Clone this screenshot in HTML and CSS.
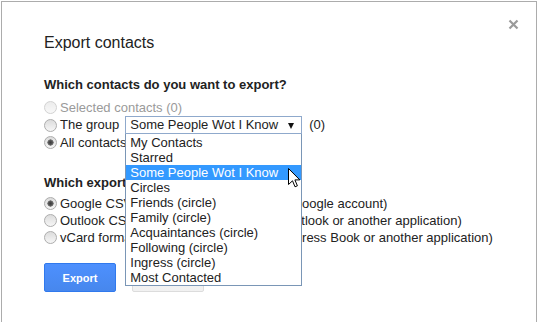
FILE: index.html
```html
<!DOCTYPE html>
<html>
<head>
<meta charset="utf-8">
<title>Export contacts</title>
<link rel="stylesheet" href="styles.css">
</head>
<body>
<div class="dialog">
  <button class="close" aria-label="Close"><svg width="11" height="11" viewBox="0 0 11 11"><path d="M1.5 1.5L9.5 9.5M9.5 1.5L1.5 9.5" stroke="#9a9a9a" stroke-width="2.2"/></svg></button>
  <h1 class="title">Export contacts</h1>

  <h2 class="heading">Which contacts do you want to export?</h2>
  <div class="options">
    <div class="row disabled"><span class="radio"></span><span>Selected contacts (0)</span></div>
    <div class="row tall"><span class="radio"></span><span>The group</span>
      <div class="select-wrap">
        <div class="select"><span>Some People Wot I Know</span><span class="arrow"></span></div>
        <ul class="list">
          <li>My Contacts</li>
          <li>Starred</li>
          <li class="hl">Some People Wot I Know</li>
          <li>Circles</li>
          <li>Friends (circle)</li>
          <li>Family (circle)</li>
          <li>Acquaintances (circle)</li>
          <li>Following (circle)</li>
          <li>Ingress (circle)</li>
          <li>Most Contacted</li>
        </ul>
        <svg class="cursor" width="13" height="20" viewBox="0 0 13 20"><path d="M0.5 0.5V16.5L4.5 12.8L7 18.8L9.4 17.8L6.9 11.9H11.8Z" fill="#fff" stroke="#000" stroke-width="1" stroke-linejoin="miter"/></svg>
      </div>
      <span class="count">(0)</span>
    </div>
    <div class="row"><span class="radio checked"></span><span>All contacts</span></div>
  </div>

  <h2 class="heading second">Which export format?</h2>
  <div class="options formats">
    <div class="row"><span class="radio checked"></span><span>Google CSV format (for importing into a Google account)</span></div>
    <div class="row"><span class="radio"></span><span>Outlook CSV format (for importing into Outlook or another application)</span></div>
    <div class="row"><span class="radio"></span><span>vCard format (for importing into Apple Address Book or another application)</span></div>
  </div>

  <div class="buttons">
    <button class="btn primary">Export</button>
    <button class="btn">Cancel</button>
  </div>
</div>
</body>
</html>
```

FILE: styles.css
```css
html, body {
  margin: 0;
  padding: 0;
  background: #fff;
  overflow: hidden;
}
body {
  box-sizing: border-box;
  height: 322px;
  padding: 1px 0 0 1px;
  font-family: "Liberation Sans", Arial, sans-serif;
  color: #222;
  font-size: 13px;
}
.dialog {
  position: relative;
  box-sizing: border-box;
  width: 536px;
  height: 321px;
  border: 1px solid #acacac;
  border-bottom: 0;
  padding: 31px 42px 0 42px;
  background: #fff;
}
.close {
  position: absolute;
  top: 17px;
  right: 17px;
  width: 11px;
  height: 11px;
  padding: 0;
  border: 0;
  background: none;
  display: block;
}
.close svg { display: block; }
.title {
  margin: 0;
  font-size: 16px;
  line-height: 20px;
  font-weight: normal;
  color: #222;
}
.heading {
  margin: 24px 0 0 0;
  font-size: 13px;
  line-height: 16px;
  font-weight: bold;
  color: #222;
}
.options {
  margin-top: 6px;
  display: flex;
  flex-direction: column;
}
.formats {
  margin-top: 4px;
}
.row {
  display: flex;
  align-items: center;
  height: 17px;
  line-height: 17px;
  white-space: nowrap;
}
.row.tall {
  height: 18px;
  line-height: 18px;
}
.row.disabled {
  color: #9a9a9a;
}
.radio {
  box-sizing: border-box;
  width: 13px;
  height: 13px;
  border-radius: 50%;
  border: 1px solid #adadad;
  background: linear-gradient(#dcdcdc, #f6f6f6);
  margin-right: 3px;
  flex: none;
}
.row.disabled .radio {
  border-color: #d2d2d2;
  background: linear-gradient(#ececec, #f8f8f8);
}
.radio.checked {
  background: radial-gradient(circle at 50% 50%, #3c3c3c 0, #555 2px, #8a8a8a 3px, transparent 3.3px), linear-gradient(#dcdcdc, #f6f6f6);
}
.select-wrap {
  position: relative;
  margin-left: 6px;
  width: 177px;
  height: 18px;
}
.select {
  box-sizing: border-box;
  width: 177px;
  height: 18px;
  border: 1px solid #8fa9cc;
  background: #fff;
  display: flex;
  align-items: center;
  justify-content: space-between;
  padding: 0 7px 0 4px;
  line-height: 16px;
  color: #222;
}
.arrow {
  width: 0;
  height: 0;
  border-left: 3.5px solid transparent;
  border-right: 3.5px solid transparent;
  border-top: 6px solid #111;
  margin-top: 1px;
}
.list {
  position: absolute;
  z-index: 2;
  top: 18px;
  left: 0;
  box-sizing: border-box;
  width: 177px;
  margin: 0;
  padding: 1px 0 0 0;
  list-style: none;
  background: #fff;
  border: 1px solid #7a96b6;
  border-top: 0;
}
.list li {
  height: 15px;
  line-height: 15px;
  padding-left: 4px;
  color: #222;
}
.list li.hl {
  background: #3399ff;
  color: #fff;
}
.cursor {
  position: absolute;
  z-index: 3;
  left: 163px;
  top: 52px;
}
.count {
  margin-left: 7px;
}
.buttons {
  margin-top: 17px;
  display: flex;
  gap: 16px;
}
.btn {
  box-sizing: border-box;
  width: 72px;
  height: 29px;
  border: 1px solid #dcdcdc;
  border-radius: 2px;
  background: linear-gradient(#f5f5f5, #f1f1f1);
  font-family: "Liberation Sans", Arial, sans-serif;
  font-size: 11px;
  font-weight: bold;
  color: #444;
  padding: 0;
}
.btn.primary {
  border-color: #3079ed;
  background: linear-gradient(#4d90fe, #4787ed);
  color: #fff;
}
```
